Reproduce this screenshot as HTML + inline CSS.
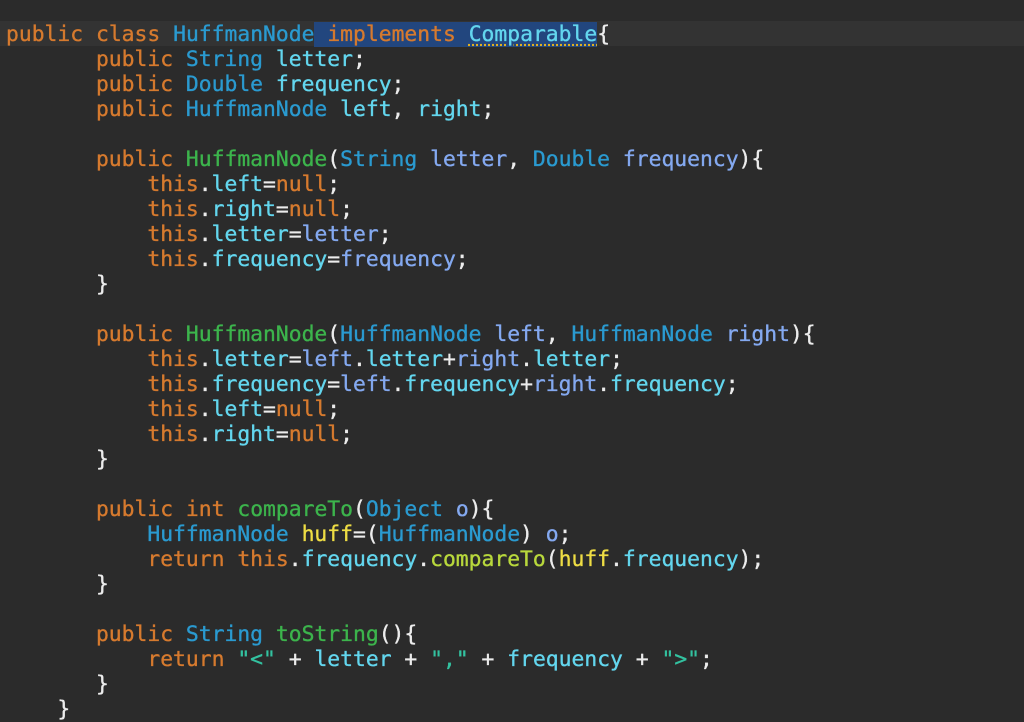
<!DOCTYPE html>
<html><head><meta charset="utf-8"><style>
html,body{margin:0;padding:0;background:#2b2b2b;width:1024px;height:719px;overflow:hidden}
pre{margin:0;position:absolute;top:22px;left:6px;font-family:"DejaVu Sans Mono","Liberation Mono",monospace;font-size:21.35px;line-height:25px;color:#ececec;-webkit-text-stroke:0.35px currentColor}
.band{position:absolute;left:0;top:21px;width:1024px;height:25px;background:#333333}
.sel{background:#22467e}
.k{color:#d67a2e}.t{color:#2a9ad0}.f{color:#63d6ee}.p{color:#84a9f0}.m{color:#3cb44c}.c{color:#b8d83c}.v{color:#eedd44}.s{color:#33c2a0}
.u{text-decoration:underline dotted #e0b020;text-underline-offset:3px}
</style></head><body>
<div class="band"></div>
<pre><span class="k">public</span> <span class="k">class</span> <span class="t">HuffmanNode</span><span class="sel"> <span class="k">implements</span> <span class="f u">Comparable</span></span>{
       <span class="k">public</span> <span class="t">String</span> <span class="f">letter</span>;
       <span class="k">public</span> <span class="t">Double</span> <span class="f">frequency</span>;
       <span class="k">public</span> <span class="t">HuffmanNode</span> <span class="f">left</span>, <span class="f">right</span>;

       <span class="k">public</span> <span class="m">HuffmanNode</span>(<span class="t">String</span> <span class="p">letter</span>, <span class="t">Double</span> <span class="p">frequency</span>){
           <span class="k">this</span>.<span class="f">left</span>=<span class="k">null</span>;
           <span class="k">this</span>.<span class="f">right</span>=<span class="k">null</span>;
           <span class="k">this</span>.<span class="f">letter</span>=<span class="p">letter</span>;
           <span class="k">this</span>.<span class="f">frequency</span>=<span class="p">frequency</span>;
       }

       <span class="k">public</span> <span class="m">HuffmanNode</span>(<span class="t">HuffmanNode</span> <span class="p">left</span>, <span class="t">HuffmanNode</span> <span class="p">right</span>){
           <span class="k">this</span>.<span class="f">letter</span>=<span class="p">left</span>.<span class="f">letter</span>+<span class="p">right</span>.<span class="f">letter</span>;
           <span class="k">this</span>.<span class="f">frequency</span>=<span class="p">left</span>.<span class="f">frequency</span>+<span class="p">right</span>.<span class="f">frequency</span>;
           <span class="k">this</span>.<span class="f">left</span>=<span class="k">null</span>;
           <span class="k">this</span>.<span class="f">right</span>=<span class="k">null</span>;
       }

       <span class="k">public</span> <span class="k">int</span> <span class="m">compareTo</span>(<span class="t">Object</span> <span class="p">o</span>){
           <span class="t">HuffmanNode</span> <span class="v">huff</span>=(<span class="t">HuffmanNode</span>) <span class="p">o</span>;
           <span class="k">return</span> <span class="k">this</span>.<span class="f">frequency</span>.<span class="c">compareTo</span>(<span class="v">huff</span>.<span class="f">frequency</span>);
       }

       <span class="k">public</span> <span class="t">String</span> <span class="m">toString</span>(){
           <span class="k">return</span> <span class="s">"&lt;"</span> + <span class="f">letter</span> + <span class="s">","</span> + <span class="f">frequency</span> + <span class="s">"&gt;"</span>;
       }
    }
</pre>
</body></html>
